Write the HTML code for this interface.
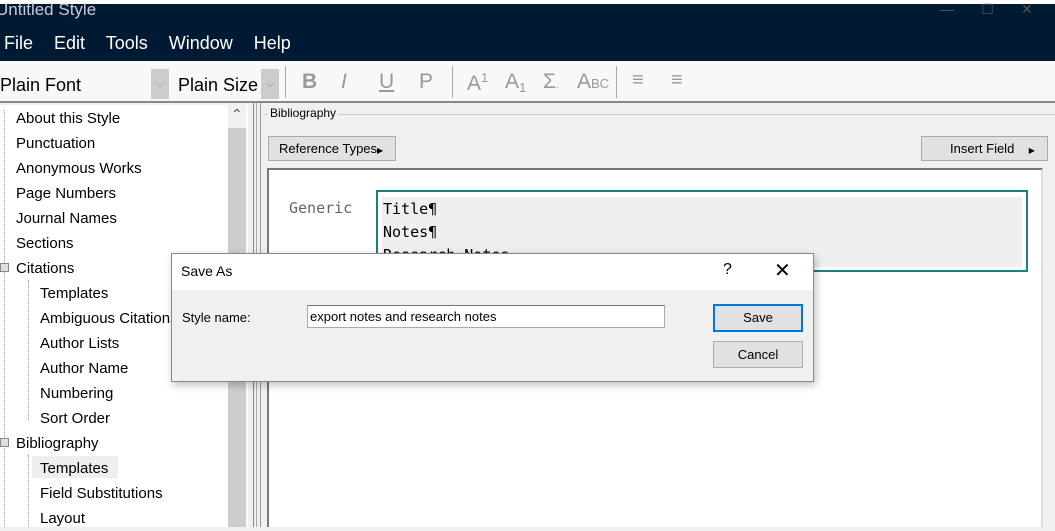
<!DOCTYPE html>
<html><head><style>
*{margin:0;padding:0;box-sizing:border-box}
body{width:1055px;height:527px;overflow:hidden;background:#f0f0f0;font-family:"Liberation Sans",sans-serif;position:relative}
.a{position:absolute;white-space:nowrap}
.tree{font-size:15px;color:#000}
.mono{font-family:"DejaVu Sans Mono","Liberation Mono",monospace}
.tb{color:#999;font-size:21px}
</style></head><body>
<div class="a" style="left:0;top:0;width:1055px;height:4px;background:#fff"></div>
<div class="a" style="left:0;top:4px;width:1055px;height:57px;background:#001a33"></div>
<div class="a" style="left:-4px;top:0;color:#c8ccd2;font-size:17px">Untitled Style</div>
<div class="a" style="left:940px;top:1px;color:#555;font-size:14px">—&nbsp;&nbsp;&nbsp;&nbsp;&nbsp;&nbsp;&nbsp;☐&nbsp;&nbsp;&nbsp;&nbsp;&nbsp;&nbsp;&nbsp;✕</div>
<div class="a" style="left:4px;top:33px;color:#fff;font-size:18px;word-spacing:2px">File&nbsp;&nbsp; Edit&nbsp;&nbsp; Tools&nbsp;&nbsp; Window&nbsp;&nbsp; Help</div>
<!-- toolbar -->
<div class="a" style="left:0;top:61px;width:1055px;height:42px;background:#f8f8f8;border-bottom:2px solid #888"></div>
<div class="a" style="left:0;top:75px;font-size:18px;color:#000">Plain Font</div>
<div class="a" style="left:151px;top:69px;width:18px;height:30px;background:#ccc;color:#888;font-size:11px;text-align:center;line-height:30px">⌵</div>
<div class="a" style="left:178px;top:75px;font-size:18px;color:#000">Plain Size</div>
<div class="a" style="left:261px;top:69px;width:18px;height:30px;background:#ccc;color:#888;font-size:11px;text-align:center;line-height:30px">⌵</div>
<div class="a" style="left:285px;top:66px;width:1px;height:32px;background:#aaa"></div>
<div class="a tb" style="left:302px;top:70px;font-weight:bold">B</div>
<div class="a tb" style="left:341px;top:70px;font-style:italic">I</div>
<div class="a tb" style="left:379px;top:70px;text-decoration:underline">U</div>
<div class="a tb" style="left:419px;top:70px">P</div>
<div class="a" style="left:452px;top:66px;width:1px;height:32px;background:#aaa"></div>
<div class="a tb" style="left:467px;top:70px">A<span style="font-size:13px;vertical-align:8px">1</span></div>
<div class="a tb" style="left:505px;top:70px">A<span style="font-size:13px;vertical-align:-4px">1</span></div>
<div class="a tb" style="left:543px;top:70px">Σ<span style="font-size:10px">.</span></div>
<div class="a tb" style="left:577px;top:70px">A<span style="font-size:13px">BC</span></div>
<div class="a" style="left:616px;top:66px;width:1px;height:32px;background:#aaa"></div>
<div class="a tb" style="left:632px;top:69px;font-size:20px">≡</div>
<div class="a tb" style="left:671px;top:69px;font-size:20px">≡</div>
<!-- tree -->
<div class="a" style="left:0;top:105px;width:248px;height:422px;background:#fff"></div>
<div class="a" style="left:228px;top:105px;width:18px;height:422px;background:#f0f0f0"></div>
<div class="a" style="left:228px;top:128px;width:18px;height:399px;background:#cdcdcd"></div>
<div class="a" style="left:231px;top:106px;color:#555;font-size:14px">⌃</div>
<div class="a" style="left:4px;top:110px;height:417px;border-left:1px dotted #999"></div>
<div class="a" style="left:28px;top:280px;height:140px;border-left:1px dotted #999"></div>
<div class="a" style="left:28px;top:455px;height:72px;border-left:1px dotted #999"></div>
<div class="a" style="left:32px;top:456px;width:86px;height:22px;background:#eee"></div>
<div class="a tree" style="left:16px;top:106px;line-height:25px">About this Style<br>Punctuation<br>Anonymous Works<br>Page Numbers<br>Journal Names<br>Sections<br>Citations</div>
<div class="a tree" style="left:40px;top:281px;line-height:25px">Templates<br>Ambiguous Citations<br>Author Lists<br>Author Name<br>Numbering<br>Sort Order</div>
<div class="a tree" style="left:16px;top:431px;line-height:25px">Bibliography</div>
<div class="a tree" style="left:40px;top:456px;line-height:25px">Templates<br>Field Substitutions<br>Layout</div>
<div class="a" style="left:0;top:263px;width:9px;height:9px;border:1px solid #888;background:#dde"></div>
<div class="a" style="left:0;top:438px;width:9px;height:9px;border:1px solid #888;background:#dde"></div>
<!-- right panel -->
<div class="a" style="left:253px;top:103px;width:4px;height:424px;border-left:1px solid #888;border-right:1px solid #aaa"></div>
<div class="a" style="left:260px;top:103px;width:2px;height:424px;border-left:1px solid #999"></div>
<div class="a" style="left:264px;top:114px;width:791px;border-top:1px solid #ccc"></div>
<div class="a" style="left:268px;top:106px;font-size:12px;background:#f0f0f0;padding:0 2px">Bibliography</div>
<div class="a" style="left:268px;top:136px;width:128px;height:25px;border:1px solid #aaa;background:#e1e1e1;font-size:13px;line-height:23px;padding-left:10px">Reference Types<span style="font-size:8px">▶</span></div>
<div class="a" style="left:921px;top:136px;width:127px;height:25px;border:1px solid #aaa;background:#e1e1e1;font-size:13px;line-height:23px;padding-left:28px">Insert Field&nbsp;&nbsp;&nbsp;&nbsp;<span style="font-size:8px">▶</span></div>
<div class="a" style="left:267px;top:168px;width:776px;height:359px;background:#fff;border:2px solid #777;border-right-color:#ddd;border-bottom:none"></div>
<div class="a mono" style="left:289px;top:199px;font-size:15px;color:#666">Generic</div>
<div class="a" style="left:376px;top:190px;width:652px;height:82px;border:2px solid #1a8080;background:#fff;padding:5px 4px"><div style="background:#efefef;height:70px"></div></div>
<div class="a mono" style="left:383px;top:198px;font-size:15px;line-height:23px;color:#000">Title¶<br>Notes¶<br>Research Notes</div>
<!-- dialog -->
<div class="a" style="left:171px;top:253px;width:643px;height:129px;background:#f0f0f0;border:1px solid #888;box-shadow:2px 3px 8px rgba(0,0,0,.25)"></div>
<div class="a" style="left:172px;top:254px;width:641px;height:36px;background:#fff"></div>
<div class="a" style="left:181px;top:263px;font-size:14px">Save As</div>
<div class="a" style="left:723px;top:261px;font-size:16px">?</div>
<div class="a" style="left:774px;top:258px;font-size:20px">✕</div>
<div class="a" style="left:182px;top:310px;font-size:13px">Style name:</div>
<div class="a" style="left:307px;top:305px;width:358px;height:23px;background:#fff;border:1px solid #aaa;border-top-color:#777;font-size:13px;padding:3px 2px">export notes and research notes</div>
<div class="a" style="left:713px;top:304px;width:90px;height:28px;border:2px solid #0078d7;background:#e1e1e1;font-size:13px;text-align:center;line-height:24px">Save</div>
<div class="a" style="left:713px;top:341px;width:90px;height:27px;border:1px solid #adadad;background:#e1e1e1;font-size:13px;text-align:center;line-height:25px">Cancel</div>
</body></html>
